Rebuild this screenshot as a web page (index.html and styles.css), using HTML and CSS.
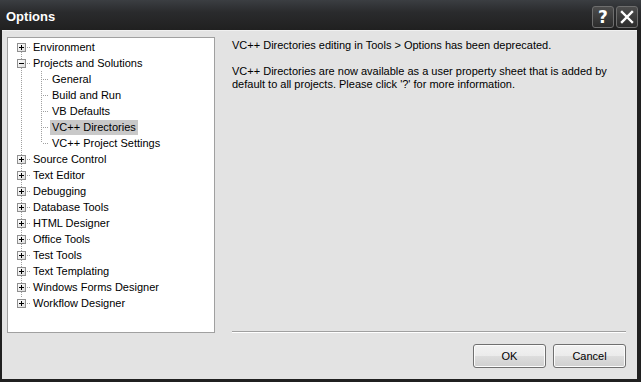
FILE: index.html
```
<!DOCTYPE html>
<html>
<head>
<meta charset="utf-8">
<link rel="stylesheet" href="styles.css">
</head>
<body>
<div class="window">
  <div class="titlebar">
    <span class="title">Options</span>
    <div class="caption-buttons">
      <div class="cap-btn help">?</div>
      <div class="cap-btn close">
        <svg width="14" height="14" viewBox="0 0 14 14"><path d="M2 2 L12 12 M12 2 L2 12" stroke="#fff" stroke-width="2.4" stroke-linecap="square"/></svg>
      </div>
    </div>
  </div>
  <div class="client">
    <div class="main">
      <div class="tree">
        <div class="tree-list">
          <div class="row top"><span class="exp"><svg width="9" height="9" viewBox="0 0 9 9"><path d="M2 4.5H7M4.5 2V7" stroke="#000" stroke-width="1"/></svg></span><span class="hline"></span><span class="label">Environment</span></div>
          <div class="row top"><span class="exp"><svg width="9" height="9" viewBox="0 0 9 9"><path d="M2 4.5H7" stroke="#000" stroke-width="1"/></svg></span><span class="hline"></span><span class="label">Projects and Solutions</span></div>
          <div class="children">
            <div class="row child"><span class="conn"></span><span class="label">General</span></div>
            <div class="row child"><span class="conn"></span><span class="label">Build and Run</span></div>
            <div class="row child"><span class="conn"></span><span class="label">VB Defaults</span></div>
            <div class="row child"><span class="conn"></span><span class="label selected">VC++ Directories</span></div>
            <div class="row child last"><span class="conn"></span><span class="label">VC++ Project Settings</span></div>
          </div>
          <div class="row top"><span class="exp"><svg width="9" height="9" viewBox="0 0 9 9"><path d="M2 4.5H7M4.5 2V7" stroke="#000" stroke-width="1"/></svg></span><span class="hline"></span><span class="label">Source Control</span></div>
          <div class="row top"><span class="exp"><svg width="9" height="9" viewBox="0 0 9 9"><path d="M2 4.5H7M4.5 2V7" stroke="#000" stroke-width="1"/></svg></span><span class="hline"></span><span class="label">Text Editor</span></div>
          <div class="row top"><span class="exp"><svg width="9" height="9" viewBox="0 0 9 9"><path d="M2 4.5H7M4.5 2V7" stroke="#000" stroke-width="1"/></svg></span><span class="hline"></span><span class="label">Debugging</span></div>
          <div class="row top"><span class="exp"><svg width="9" height="9" viewBox="0 0 9 9"><path d="M2 4.5H7M4.5 2V7" stroke="#000" stroke-width="1"/></svg></span><span class="hline"></span><span class="label">Database Tools</span></div>
          <div class="row top"><span class="exp"><svg width="9" height="9" viewBox="0 0 9 9"><path d="M2 4.5H7M4.5 2V7" stroke="#000" stroke-width="1"/></svg></span><span class="hline"></span><span class="label">HTML Designer</span></div>
          <div class="row top"><span class="exp"><svg width="9" height="9" viewBox="0 0 9 9"><path d="M2 4.5H7M4.5 2V7" stroke="#000" stroke-width="1"/></svg></span><span class="hline"></span><span class="label">Office Tools</span></div>
          <div class="row top"><span class="exp"><svg width="9" height="9" viewBox="0 0 9 9"><path d="M2 4.5H7M4.5 2V7" stroke="#000" stroke-width="1"/></svg></span><span class="hline"></span><span class="label">Test Tools</span></div>
          <div class="row top"><span class="exp"><svg width="9" height="9" viewBox="0 0 9 9"><path d="M2 4.5H7M4.5 2V7" stroke="#000" stroke-width="1"/></svg></span><span class="hline"></span><span class="label">Text Templating</span></div>
          <div class="row top"><span class="exp"><svg width="9" height="9" viewBox="0 0 9 9"><path d="M2 4.5H7M4.5 2V7" stroke="#000" stroke-width="1"/></svg></span><span class="hline"></span><span class="label">Windows Forms Designer</span></div>
          <div class="row top"><span class="exp"><svg width="9" height="9" viewBox="0 0 9 9"><path d="M2 4.5H7M4.5 2V7" stroke="#000" stroke-width="1"/></svg></span><span class="hline"></span><span class="label">Workflow Designer</span></div>
        </div>
      </div>
      <div class="panel">
        <p class="msg">VC++ Directories editing in Tools &gt; Options has been deprecated.</p>
        <p class="msg">VC++ Directories are now available as a user property sheet that is added by<br>default to all projects. Please click '?' for more information.</p>
      </div>
    </div>
    <div class="footer">
      <button class="btn">OK</button>
      <button class="btn">Cancel</button>
    </div>
  </div>
</div>
</body>
</html>
```
FILE: styles.css
```
* { box-sizing: border-box; }
html, body { margin: 0; padding: 0; }
body {
  width: 641px;
  height: 382px;
  overflow: hidden;
  background: #1c1c1c;
  font-family: "Liberation Sans", Arial, sans-serif;
  font-size: 11px;
  color: #000;
}
.window {
  width: 641px;
  height: 382px;
  display: flex;
  flex-direction: column;
  background: #202020;
}
.titlebar {
  height: 30px;
  display: flex;
  align-items: center;
  justify-content: space-between;
  padding: 0 3px 0 6px;
  background: linear-gradient(to bottom, #3b3e42 0%, #2a2b2d 40%, #202020 100%);
}
.title {
  color: #fff;
  font-weight: bold;
  font-size: 13px;
  padding-top: 3px;
}
.caption-buttons {
  display: flex;
  gap: 2px;
  padding-top: 4px;
}
.cap-btn {
  width: 22px;
  height: 22px;
  border: 1px solid #6e6e6e;
  border-radius: 3px;
  background: linear-gradient(to bottom, #4d4d4d, #2c2c2c);
  display: flex;
  align-items: center;
  justify-content: center;
  color: #fff;
}
.help {
  font-size: 17px;
  font-weight: bold;
  font-family: "DejaVu Sans", sans-serif;
}
.client {
  flex: 1;
  margin: 0 4px 3px 2px;
  background: #e3e3e3;
  border-top: 1px solid #f0f0f0;
  display: flex;
  flex-direction: column;
}
.main {
  display: flex;
  padding-top: 6px;
}
.tree {
  margin-left: 5px;
  width: 208px;
  height: 296px;
  background: #fff;
  border: 1px solid #a0a0a0;
  padding-top: 1px;
}
.tree-list {
  position: relative;
}
.tree-list::before {
  content: "";
  position: absolute;
  left: 13px;
  top: 13px;
  bottom: 13px;
  width: 1px;
  background: repeating-linear-gradient(to bottom, #a0a0a0 0 1px, transparent 1px 2px);
}
.row {
  height: 16px;
  display: flex;
  align-items: center;
  white-space: nowrap;
}
.top { padding-left: 9px; }
.exp {
  position: relative;
  z-index: 1;
  width: 9px;
  height: 9px;
  border: 1px solid #8f8f8f;
  background: linear-gradient(to bottom right, #ffffff, #dcdcdc);
  display: block;
}
.exp svg {
  display: block;
  margin: -1px 0 0 -1px;
}
.hline {
  width: 4px;
  height: 1px;
  margin-left: 1px;
  background: repeating-linear-gradient(to right, #a0a0a0 0 1px, transparent 1px 2px);
}
.label {
  padding: 0 2px;
  margin-left: 0;
  line-height: 15px;
}
.top .label { margin-left: 0; }
.selected {
  background: #c9c9c9;
}
.child { padding-left: 33px; }
.conn {
  position: relative;
  width: 8px;
  height: 16px;
  margin-right: 1px;
}
.conn::before {
  content: "";
  position: absolute;
  left: 0;
  top: 0;
  width: 1px;
  height: 16px;
  background: repeating-linear-gradient(to bottom, #a0a0a0 0 1px, transparent 1px 2px);
}
.last .conn::before { height: 8px; }
.conn::after {
  content: "";
  position: absolute;
  left: 1px;
  top: 8px;
  width: 7px;
  height: 1px;
  background: repeating-linear-gradient(to right, transparent 0 1px, #a0a0a0 1px 2px);
}
.panel {
  margin-left: 17px;
  width: 394px;
  height: 295px;
  border-bottom: 1px solid #a0a0a0;
  box-shadow: 0 1px 0 #ffffff;
  padding-top: 2px;
}
.msg {
  margin: 0 0 13px 0;
  line-height: 13px;
}
.footer {
  display: flex;
  justify-content: flex-end;
  gap: 7px;
  padding: 11px 11px 0 0;
}
.btn {
  width: 73px;
  height: 24px;
  font-family: "Liberation Sans", Arial, sans-serif;
  font-size: 11px;
  color: #000;
  border: 1px solid #707070;
  border-radius: 3px;
  background: linear-gradient(to bottom, #f2f2f2 0%, #ebebeb 50%, #dddddd 50%, #cfcfcf 100%);
  box-shadow: inset 0 0 0 1px #fcfcfc;
  padding: 0;
}
```
